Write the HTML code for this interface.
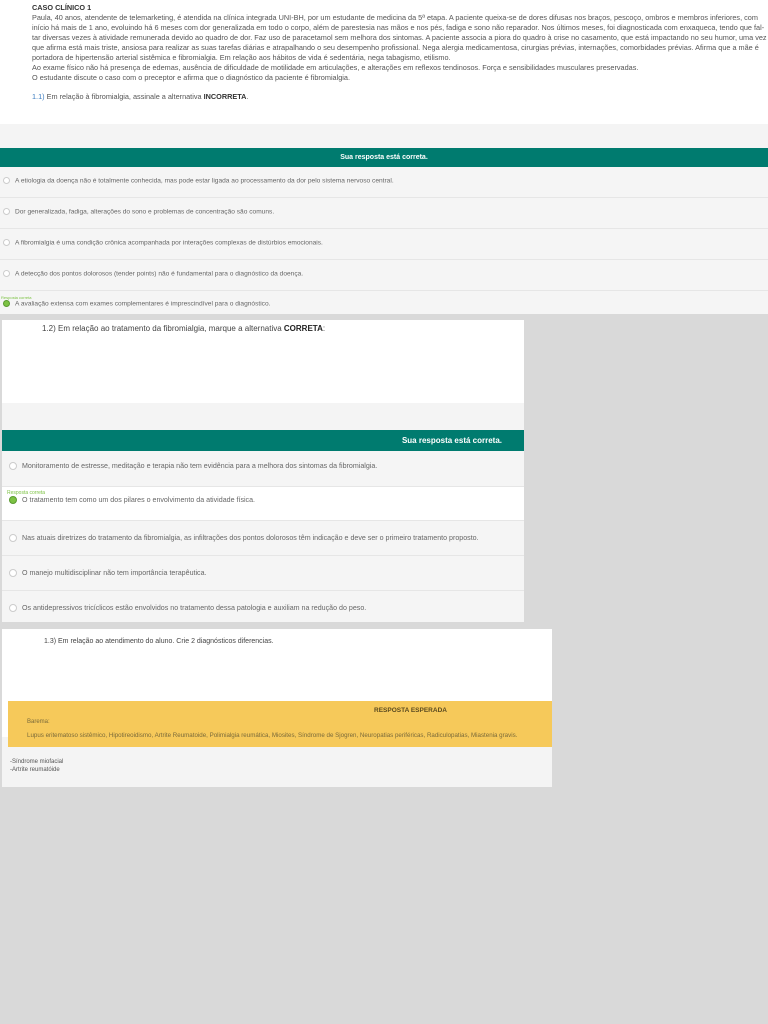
<!DOCTYPE html>
<html><head><meta charset="utf-8"><style>
*{margin:0;padding:0;box-sizing:border-box}
body{width:768px;height:1024px;background:#d9d9d9;font-family:"Liberation Sans",sans-serif;position:relative;overflow:hidden;color:#444}
.abs{position:absolute}
.t{font-size:7.3px;line-height:10px;color:#555}
.teal{background:#007b6f;color:#fff;font-weight:bold;font-size:7px}
.row{position:absolute;left:0;right:0;border-bottom:1px solid #e6e6e6;font-size:6.6px;color:#666}
.rad{display:inline-block;width:7px;height:7px;border:1px solid #ccc;border-radius:50%;vertical-align:middle;margin-right:5px;background:#fff}
.radg{background:#7cc243;border-color:#5a9a30}
.r2{font-size:7.1px}
.r2 .rad{width:8px;height:8px}
</style></head><body>
<div class="abs" style="left:0;top:0;width:768px;height:314px;background:#fff">
 <div class="abs t" style="left:32px;top:3px;width:735px">
  <div style="font-weight:bold;color:#333">CASO CLÍNICO 1</div>
  Paula, 40 anos, atendente de telemarketing, é atendida na clínica integrada UNI-BH, por um estudante de medicina da 5ª etapa. A paciente queixa-se de dores difusas nos braços, pescoço, ombros e membros inferiores, com início há mais de 1 ano, evoluindo há 6 meses com dor generalizada em todo o corpo, além de parestesia nas mãos e nos pés, fadiga e sono não reparador. Nos últimos meses, foi diagnosticada com enxaqueca, tendo que fal-tar diversas vezes à atividade remunerada devido ao quadro de dor. Faz uso de paracetamol sem melhora dos sintomas. A paciente associa a piora do quadro à crise no casamento, que está impactando no seu humor, uma vez que afirma está mais triste, ansiosa para realizar as suas tarefas diárias e atrapalhando o seu desempenho profissional. Nega alergia medicamentosa, cirurgias prévias, internações, comorbidades prévias. Afirma que a mãe é portadora de hipertensão arterial sistêmica e fibromialgia. Em relação aos hábitos de vida é sedentária, nega tabagismo, etilismo.<br>
  Ao exame físico não há presença de edemas, ausência de dificuldade de motilidade em articulações, e alterações em reflexos tendinosos. Força e sensibilidades musculares preservadas.<br>
  O estudante discute o caso com o preceptor e afirma que o diagnóstico da paciente é fibromialgia.
  <div style="margin-top:9px"><span style="color:#3a7bbf">1.1)</span> Em relação à fibromialgia, assinale a alternativa <b style="color:#333">INCORRETA</b>.</div>
 </div>
 <div class="abs" style="left:0;top:124px;width:768px;height:24px;background:#f4f4f4"></div>
 <div class="abs teal" style="left:0;top:148px;width:768px;height:19px;line-height:19px;text-align:center">Sua resposta está correta.</div>
 <div class="abs" style="left:0;top:167px;width:768px;height:147px;background:#f5f5f5">
  <div class="row" style="top:0;height:31px;padding:10px 0 0 3px"><span class="rad"></span>A etiologia da doença não é totalmente conhecida, mas pode estar ligada ao processamento da dor pelo sistema nervoso central.</div>
  <div class="row" style="top:31px;height:31px;padding:10px 0 0 3px"><span class="rad"></span>Dor generalizada, fadiga, alterações do sono e problemas de concentração são comuns.</div>
  <div class="row" style="top:62px;height:31px;padding:10px 0 0 3px"><span class="rad"></span>A fibromialgia é uma condição crônica acompanhada por interações complexas de distúrbios emocionais.</div>
  <div class="row" style="top:93px;height:31px;padding:10px 0 0 3px"><span class="rad"></span>A detecção dos pontos dolorosos (tender points) não é fundamental para o diagnóstico da doença.</div>
  <div class="row" style="top:124px;height:23px;padding:4px 0 0 3px;border:0"><div style="font-size:4px;color:#7cc243;margin-left:-2px">Resposta correta</div><span class="rad radg"></span>A avaliação extensa com exames complementares é imprescindível para o diagnóstico.</div>
 </div>
</div>
<div class="abs" style="left:2px;top:320px;width:522px;height:302px;background:#fff">
 <div class="abs" style="left:40px;top:4px;font-size:8px;color:#444">1.2) Em relação ao tratamento da fibromialgia, marque a alternativa <b style="color:#222">CORRETA</b>:</div>
 <div class="abs" style="left:0;top:83px;width:522px;height:27px;background:#f4f4f4"></div>
 <div class="abs teal" style="left:0;top:110px;width:522px;height:21px;line-height:21px;text-align:right;padding-right:22px;font-size:8px">Sua resposta está correta.</div>
 <div class="abs" style="left:0;top:131px;width:522px;height:171px;background:#f5f5f5">
  <div class="row r2" style="top:0;height:36px;padding:11px 0 0 7px"><span class="rad"></span>Monitoramento de estresse, meditação e terapia não tem evidência para a melhora dos sintomas da fibromialgia.</div>
  <div class="row r2" style="top:36px;height:34px;padding:3px 0 0 5px;background:#fff"><div style="font-size:5px;color:#7cc243">Resposta correta</div><span class="rad radg" style="margin-left:2px"></span>O tratamento tem como um dos pilares o envolvimento da atividade física.</div>
  <div class="row r2" style="top:70px;height:35px;padding:13px 0 0 7px"><span class="rad"></span>Nas atuais diretrizes do tratamento da fibromialgia, as infiltrações dos pontos dolorosos têm indicação e deve ser o primeiro tratamento proposto.</div>
  <div class="row r2" style="top:105px;height:35px;padding:13px 0 0 7px"><span class="rad"></span>O manejo multidisciplinar não tem importância terapêutica.</div>
  <div class="row r2" style="top:140px;height:31px;padding:13px 0 0 7px;border:0"><span class="rad"></span>Os antidepressivos tricíclicos estão envolvidos no tratamento dessa patologia e auxiliam na redução do peso.</div>
 </div>
</div>
<div class="abs" style="left:2px;top:629px;width:550px;height:158px;background:#fff">
 <div class="abs" style="left:42px;top:9px;font-size:7px;color:#444">1.3) Em relação ao atendimento do aluno. Crie 2 diagnósticos diferencias.</div>
 <div class="abs" style="left:0;top:108px;width:550px;height:50px;background:#f4f4f4"></div>
 <div class="abs" style="left:6px;top:72px;width:544px;height:46px;background:#f6c95a;font-size:6px;color:#7a6a3a">
  <div class="abs" style="left:366px;top:6px;font-weight:bold;color:#5a4a20;font-size:6.5px">RESPOSTA ESPERADA</div>
  <div class="abs" style="left:19px;top:18px">Barema:</div>
  <div class="abs" style="left:19px;top:31px;white-space:nowrap;font-size:6.2px">Lupus eritematoso sistêmico, Hipotireoidismo, Artrite Reumatoide, Polimialgia reumática, Miosites, Síndrome de Sjogren, Neuropatias periféricas, Radiculopatias, Miastenia gravis.</div>
 </div>
 <div class="abs" style="left:8px;top:129px;font-size:6px;line-height:8px;color:#555">-Síndrome miofacial<br>-Artrite reumatóide</div>
</div>
</body></html>
